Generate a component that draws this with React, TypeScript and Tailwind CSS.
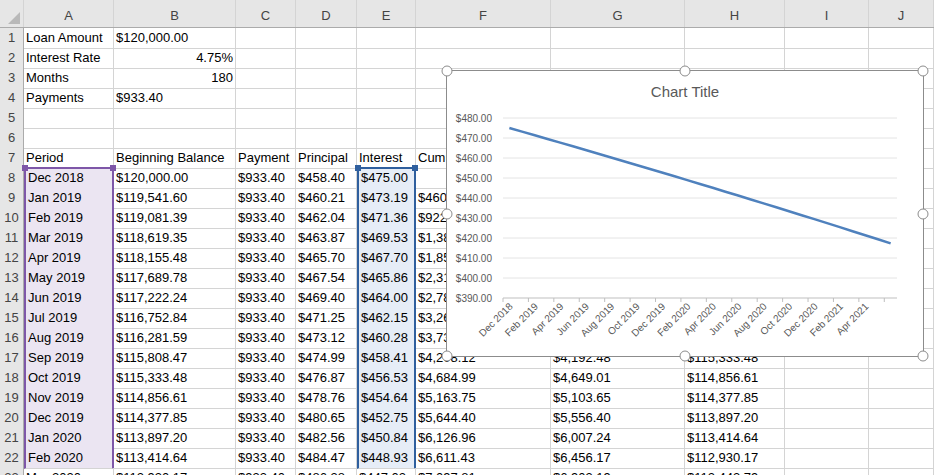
import React from 'react';

const cols = [
  { k: '', w: 24 }, { k: 'A', w: 90 }, { k: 'B', w: 122 }, { k: 'C', w: 60 }, { k: 'D', w: 61 },
  { k: 'E', w: 59 }, { k: 'F', w: 135 }, { k: 'G', w: 134 }, { k: 'H', w: 100 }, { k: 'I', w: 84 }, { k: 'J', w: 65 },
];
const months = ['Jan', 'Feb', 'Mar', 'Apr', 'May', 'Jun', 'Jul', 'Aug', 'Sep', 'Oct', 'Nov', 'Dec'];
const money = (n: number) => '$' + n.toLocaleString('en-US', { minimumFractionDigits: 2, maximumFractionDigits: 2 });

// amortization schedule
const rate = 0.0475 / 12;
const sched: { label: string; bal: number; int: number; prin: number }[] = [];
let bal = 120000;
for (let i = 0; i < 31; i++) {
  const int = Math.round(bal * rate * 100) / 100;
  const prin = Math.round((933.4 - int) * 100) / 100;
  const m = (11 + i) % 12;
  const y = 2018 + Math.floor((11 + i) / 12);
  sched.push({ label: `${months[m]} ${y}`, bal, int, prin });
  bal = Math.round((bal - prin) * 100) / 100;
}

type Cell = { t?: string; r?: boolean };
const rows: Cell[][] = [
  [{ t: 'Loan Amount' }, { t: '$120,000.00' }],
  [{ t: 'Interest Rate' }, { t: '4.75%', r: true }],
  [{ t: 'Months' }, { t: '180', r: true }],
  [{ t: 'Payments' }, { t: '$933.40' }],
  [],
  [],
  [{ t: 'Period' }, { t: 'Beginning Balance' }, { t: 'Payment' }, { t: 'Principal' }, { t: 'Interest' }, { t: 'Cumulative Principal' }, { t: 'Cumulative Interest' }, { t: 'Ending Balance' }],
];
let cp = 0, ci = 0;
for (let i = 0; i < 16; i++) {
  const s = sched[i];
  if (i > 0) { cp += s.prin; ci += s.int; }
  rows.push([
    { t: s.label }, { t: money(s.bal) }, { t: '$933.40' }, { t: money(s.prin) }, { t: money(s.int) },
    { t: i > 0 ? money(cp) : '' }, { t: i > 0 ? money(ci) : '' }, { t: i > 0 ? money(s.bal - s.prin) : '' },
  ]);
}

function Chart() {
  const x0 = 56, x1 = 450, n = 31, cw = (x1 - x0) / n;
  const ys = (v: number) => 47 + (480 - v) * 2;
  const pts = sched.map((s, i) => `${x0 + cw * (i + 0.5)},${ys(s.int)}`).join(' ');
  return (
    <div className="absolute z-20 left-[446px] top-[70px] w-[478px] h-[287px] bg-white border border-[#8c8c8c]">
      <div className="text-center text-[15px] text-[#595959] mt-[10px]">Chart Title</div>
      <svg className="absolute left-0 top-0" width="478" height="287">
        {[480, 470, 460, 450, 440, 430, 420, 410, 400, 390].map((v) => (
          <g key={v}>
            <line x1={x0} x2={x1} y1={ys(v)} y2={ys(v)} stroke={v === 390 ? '#bfbfbf' : '#e4e4e4'} />
            <text x={45} y={ys(v) + 3.5} fontSize="10" fill="#595959" textAnchor="end" fontFamily="Liberation Sans">{money(v)}</text>
          </g>
        ))}
        {Array.from({ length: 16 }).map((_, i) => (
          <line key={i} x1={x0 + cw * 2 * i} x2={x0 + cw * 2 * i} y1={227} y2={231} stroke="#bfbfbf" />
        ))}
        {sched.filter((_, i) => i % 2 === 0 && i < 30).map((s, j) => {
          const x = x0 + cw * (j * 2 + 0.5) + 4;
          return (
            <text key={s.label} x={x} y={236} fontSize="10" fill="#595959" textAnchor="end" fontFamily="Liberation Sans" transform={`rotate(-45 ${x} 236)`}>{s.label}</text>
          );
        })}
        <polyline points={pts} fill="none" stroke="#4f81bd" strokeWidth="2.5" strokeLinejoin="round" />
      </svg>
      {[[0, 0], [50, 0], [100, 0], [0, 50], [100, 50], [0, 100], [50, 100], [100, 100]].map(([l, t], i) => (
        <div key={i} className="absolute w-[11px] h-[11px] rounded-full border-[1.5px] border-[#8c8c8c] bg-white -translate-x-1/2 -translate-y-1/2" style={{ left: `${l}%`, top: `${t}%` }} />
      ))}
    </div>
  );
}

export default function App() {
  const tpl = cols.map((c) => `${c.w}px`).join(' ');
  return (
    <div className="relative w-[934px] h-[475px] overflow-hidden bg-white text-[13px] text-black" style={{ fontFamily: '"Liberation Sans", Arial, sans-serif' }}>
      <div className="grid h-[28px] bg-[#e6e6e6] border-b border-[#ababab]" style={{ gridTemplateColumns: tpl }}>
        {cols.map((c, i) => (
          <div key={i} className={`flex items-end justify-center pb-[2px] text-[#444] border-r border-[#d4d4d4] ${i === 0 ? 'relative' : ''}`}>
            {i === 0 ? <div className="absolute right-[3px] bottom-[3px] w-0 h-0 border-l-[12px] border-l-transparent border-b-[12px] border-b-[#b9b9b9]" /> : c.k}
          </div>
        ))}
      </div>
      {Array.from({ length: 23 }).map((_, ri) => {
        const r = rows[ri] || [];
        const sel = ri >= 7 && ri <= 21;
        return (
          <div key={ri} className="grid h-[20px]" style={{ gridTemplateColumns: tpl }}>
            <div className="bg-[#e6e6e6] border-r border-[#ababab] border-b border-b-[#d4d4d4] flex items-center justify-center text-[#444]">{ri + 1}</div>
            {cols.slice(1).map((_, ci2) => {
              const c = r[ci2] || {};
              let extra = 'border-r border-b border-[#d4d4d4]';
              if (sel && ci2 === 0) extra = 'bg-[#ebe5f2] border-r-2 border-r-[#7e57a8] border-l-2 border-l-[#7e57a8] border-b border-b-[#d4d4d4]';
              if (sel && ci2 === 4) extra = 'bg-[#e6edf7] border-r-2 border-r-[#2f5f9e] border-l-2 border-l-[#2f5f9e] border-b border-b-[#d4d4d4]';
              if (ri === 6 && (ci2 === 0 || ci2 === 4)) extra += ' relative';
              const accent = ci2 === 0 ? 'bg-[#7e57a8]' : 'bg-[#2f5f9e]';
              return (
                <div key={ci2} className={`${extra} flex items-center px-[2px] whitespace-nowrap ${c.r ? 'justify-end' : ''}`}>
                  <span className="relative z-[1]">{c.t}</span>
                  {ri === 6 && (ci2 === 0 || ci2 === 4) && (
                    <div className={`absolute left-0 right-0 bottom-[-1px] h-[2px] ${accent}`}>
                      <div className={`absolute -left-[2px] -top-[2px] w-[6px] h-[6px] ${accent}`} />
                      <div className={`absolute -right-[3px] -top-[2px] w-[6px] h-[6px] ${accent}`} />
                    </div>
                  )}
                </div>
              );
            })}
          </div>
        );
      })}
      <Chart />
    </div>
  );
}
